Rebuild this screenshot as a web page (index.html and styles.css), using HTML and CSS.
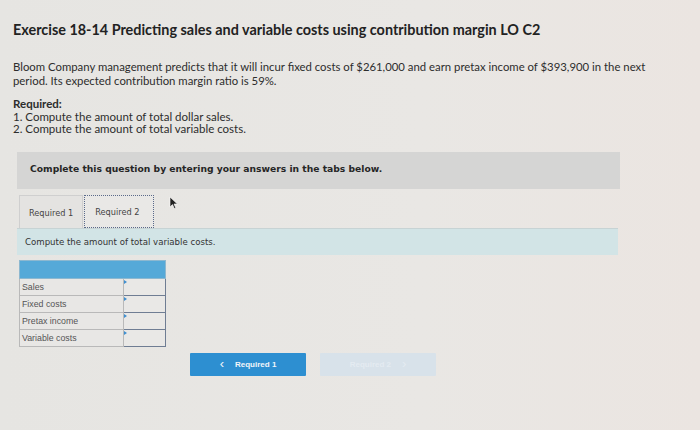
FILE: index.html
```html
<!DOCTYPE html>
<html>
<head>
<meta charset="utf-8">
<link rel="stylesheet" href="styles.css">
</head>
<body>
<div class="page">
  <h1 class="title">Exercise 18-14 Predicting sales and variable costs using contribution margin LO C2</h1>
  <p class="intro">Bloom Company management predicts that it will incur fixed costs of $261,000 and earn pretax income of $393,900 in the next period. Its expected contribution margin ratio is 59%.</p>
  <div class="required">
    <div class="req-head">Required:</div>
    <div>1. Compute the amount of total dollar sales.</div>
    <div>2. Compute the amount of total variable costs.</div>
  </div>
  <div class="instr">Complete this question by entering your answers in the tabs below.</div>
  <div class="tabs">
    <div class="tab">Required 1</div>
    <div class="tab active">Required 2</div>
    <svg class="cursor" width="10" height="14" viewBox="0 0 10 14"><path d="M1 1 L1 11 L3.5 8.6 L5.3 12.6 L6.8 11.9 L5 8 L8.4 8 Z" fill="#222" stroke="#fff" stroke-width="0.6"/></svg>
  </div>
  <div class="prompt">Compute the amount of total variable costs.</div>
  <table class="grid">
    <tr class="hdr"><td colspan="2"></td></tr>
    <tr><td class="lbl">Sales</td><td class="inp"><span class="flag"></span></td></tr>
    <tr><td class="lbl">Fixed costs</td><td class="inp"><span class="flag"></span></td></tr>
    <tr><td class="lbl">Pretax income</td><td class="inp"><span class="flag"></span></td></tr>
    <tr><td class="lbl">Variable costs</td><td class="inp"><span class="flag"></span></td></tr>
  </table>
  <div class="nav">
    <div class="btn prev"><span class="chev">&lsaquo;</span> Required 1</div>
    <div class="btn next">Required 2 <span class="chev">&rsaquo;</span></div>
  </div>
</div>
</body>
</html>
```

FILE: styles.css
```css
html, body {
  margin: 0;
  padding: 0;
}
body {
  width: 700px;
  height: 430px;
  overflow: hidden;
  background: linear-gradient(90deg, #e6e5e2 0%, #e9e7e4 60%, #ebe5e1 100%);
  font-family: Lato, "Liberation Sans", sans-serif;
  color: #2a2a2a;
}
.page {
  padding: 21px 0 0 13px;
}
.title {
  margin: 0;
  font-size: 14.4px;
  font-weight: 700;
  color: #222;
  line-height: 18px;
}
.intro {
  margin: 21px 0 0;
  width: 665px;
  font-size: 11.35px;
  line-height: 14px;
  color: #2d2d2d;
}
.required {
  margin-top: 10px;
  font-size: 11.5px;
  line-height: 12.6px;
  color: #2d2d2d;
}
.req-head {
  font-weight: 700;
}
.instr {
  margin: 16px 0 0 4px;
  width: 590px;
  height: 37px;
  padding-left: 13px;
  box-sizing: content-box;
  background: #d5d5d4;
  font-family: "DejaVu Sans", Verdana, sans-serif;
  font-weight: 700;
  font-size: 9.2px;
  line-height: 33px;
  color: #262626;
}
.tabs {
  display: flex;
  align-items: stretch;
  margin: 6px 0 0 6px;
  height: 33px;
  position: relative;
}
.tab {
  font-family: "DejaVu Sans", Verdana, sans-serif;
  font-size: 8.2px;
  color: #444;
  padding: 2px 9px 0;
  display: flex;
  align-items: center;
  border: 1px solid #cfcfcf;
  border-bottom: none;
  background: #e4e3e1;
}
.tab.active {
  border: 1px dotted #5a6a8a;
  background: #e9e8e6;
  padding: 2px 10px 0;
  width: 48px;
  margin-left: 1px;
}
.cursor {
  position: absolute;
  left: 150px;
  top: 1px;
}
.prompt {
  margin-left: 4px;
  width: 593px;
  height: 26px;
  padding-left: 8px;
  background: #d2e4e6;
  border-top: 1px solid #c7d3d4;
  font-family: "DejaVu Sans", Verdana, sans-serif;
  font-size: 8.6px;
  line-height: 26px;
  color: #333;
}
.grid {
  margin: 5px 0 0 6px;
  border-collapse: collapse;
  font-family: "Liberation Sans", Arial, sans-serif;
  font-size: 8.8px;
  color: #555;
}
.grid .hdr td {
  background: #55a9d8;
  height: 17px;
  padding: 0;
  border: 1px solid #8db8d0;
}
.grid td {
  height: 16px;
  padding: 0;
}
.grid .lbl {
  width: 101px;
  padding-left: 2px;
  border: 1px solid #b9b9b9;
  background: #e8e7e5;
}
.grid .inp {
  width: 41px;
  border: 1.5px solid #6f7d93;
  background: #e9e8e6;
  position: relative;
  vertical-align: top;
}
.flag {
  position: absolute;
  left: 0;
  top: 1px;
  width: 0;
  height: 0;
  border-top: 2px solid transparent;
  border-bottom: 2px solid transparent;
  border-left: 3px solid #3f8fd0;
}
.nav {
  display: flex;
  gap: 14px;
  margin: 6px 0 0 177px;
}
.btn {
  width: 116px;
  height: 23px;
  display: flex;
  align-items: center;
  justify-content: center;
  gap: 5px;
  font-family: "Liberation Sans", Arial, sans-serif;
  font-weight: 700;
  font-size: 8px;
  border-radius: 1px;
}
.btn .chev {
  font-size: 13px;
  font-weight: 400;
  line-height: 1;
  margin-top: -2px;
  margin-right: 6px;
}
.btn.next .chev {
  margin-right: 0;
  margin-left: 6px;
}
.prev {
  background: #2d8fd1;
  color: #f2f6fa;
}
.next {
  background: #d8e2ea;
  color: #e4ebf1;
}
```
